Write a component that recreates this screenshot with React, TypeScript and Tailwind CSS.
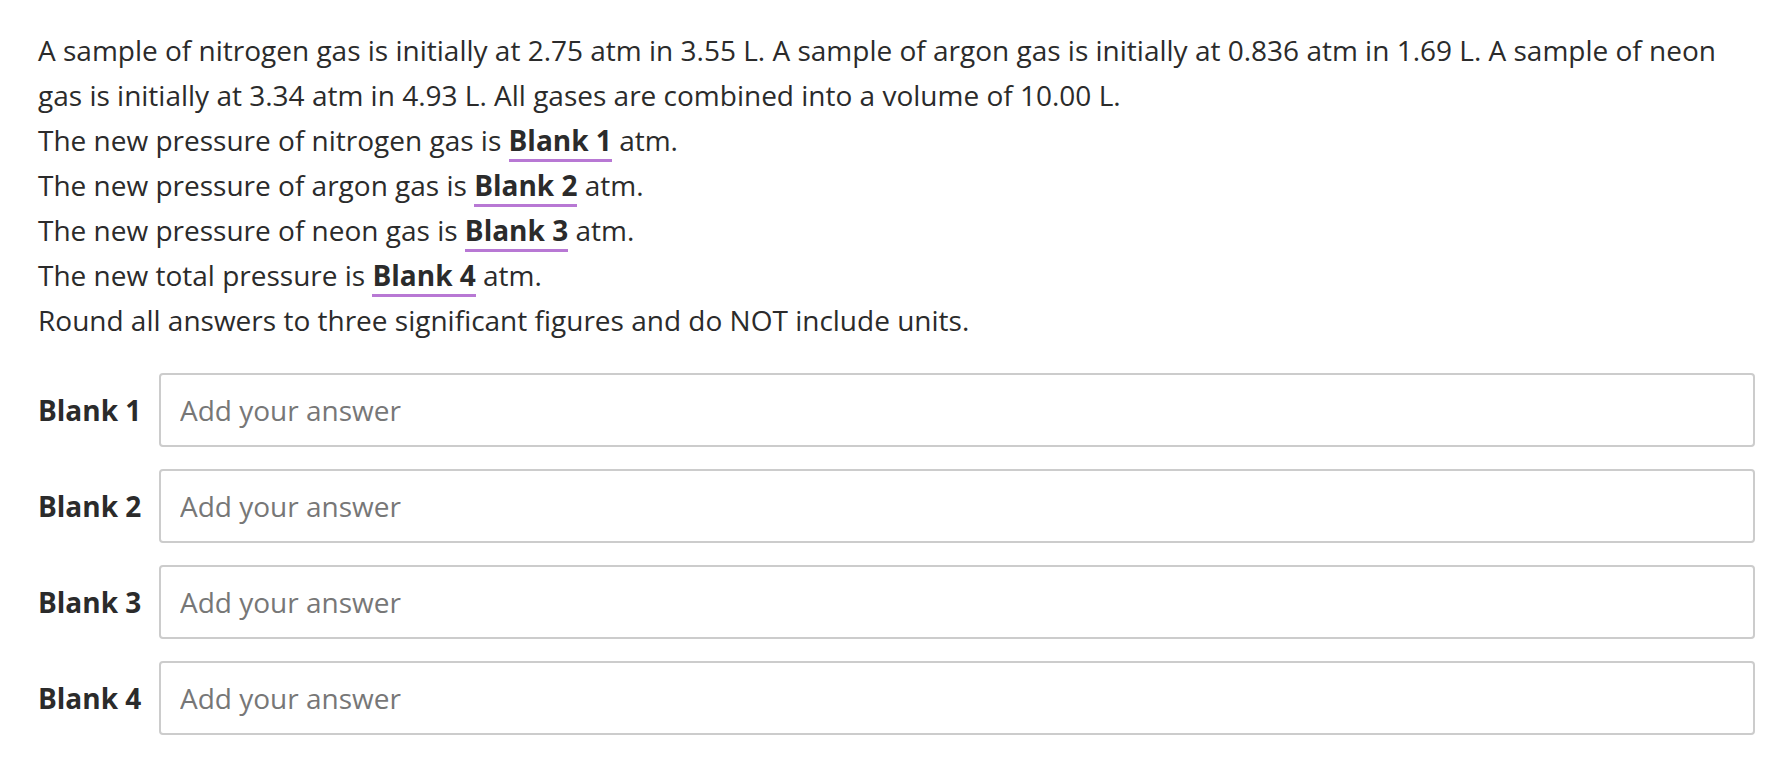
import React from 'react';

const blanks = ['Blank 1', 'Blank 2', 'Blank 3', 'Blank 4'];

const BlankRef: React.FC<{ label: string }> = ({ label }) => (
  <span className="font-bold border-b-[3px] border-[#b878d4]">{label}</span>
);

export default function App() {
  return (
    <div
      className="min-h-screen bg-white text-[#2b2b2b] pl-[38px] pr-[19px] pt-[28px] pb-8"
      style={{ fontFamily: '"Open Sans", "Noto Sans", sans-serif' }}
    >
      <div className="text-[28px] leading-[45px]">
        <p>
          A sample of nitrogen gas is initially at 2.75 atm in 3.55 L. A sample of argon gas is initially at 0.836 atm
          in 1.69 L. A sample of neon gas is initially at 3.34 atm in 4.93 L. All gases are combined into a volume of
          10.00 L.
        </p>
        <p>
          The new pressure of nitrogen gas is <BlankRef label="Blank 1" /> atm.
        </p>
        <p>
          The new pressure of argon gas is <BlankRef label="Blank 2" /> atm.
        </p>
        <p>
          The new pressure of neon gas is <BlankRef label="Blank 3" /> atm.
        </p>
        <p>
          The new total pressure is <BlankRef label="Blank 4" /> atm.
        </p>
        <p>Round all answers to three significant figures and do NOT include units.</p>
      </div>

      <div className="mt-[30px] flex flex-col gap-[22px]">
        {blanks.map((b) => (
          <div key={b} className="flex items-center">
            <label className="w-[121px] shrink-0 text-[28px] font-bold">{b}</label>
            <input
              type="text"
              placeholder="Add your answer"
              className="flex-1 h-[74px] border-2 border-[#cccccc] rounded-[4px] px-[19px] text-[28px] text-[#2b2b2b] placeholder:text-[#777777] outline-none bg-white"
            />
          </div>
        ))}
      </div>
    </div>
  );
}
